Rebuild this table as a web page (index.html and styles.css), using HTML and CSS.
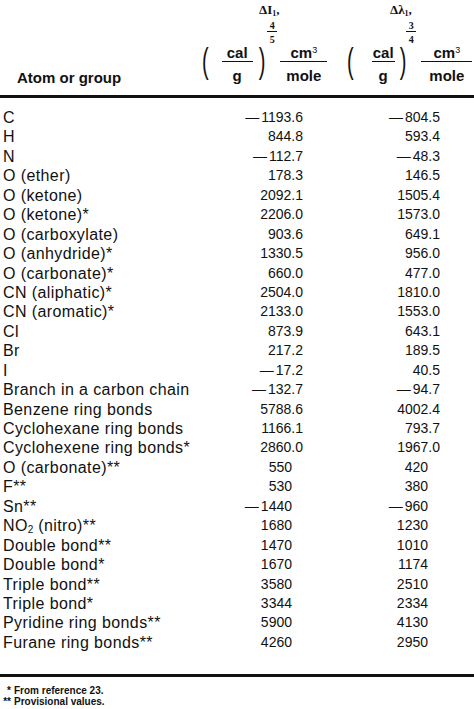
FILE: index.html
```html
<!DOCTYPE html>
<html lang="en">
<head>
<meta charset="utf-8">
<title>Group contributions</title>
<link rel="stylesheet" href="styles.css">
</head>
<body>
<table class="data">
  <colgroup>
    <col class="c-label">
    <col class="c-one">
    <col class="c-two">
  </colgroup>
  <thead>
    <tr>
      <th class="h-label">Atom or group</th>
      <th class="h-col h-one">
        <div class="h-sym">Δ<span class="sym-i">I</span><sub>1</sub>,</div>
        <div class="h-row">
          <span class="paren">(</span>
          <span class="frac f-cal"><span class="fn">cal</span><span class="fd">g</span></span>
          <span class="paren close">)</span>
          <span class="expo"><span class="en">4</span><span class="ed">5</span></span>
          <span class="frac f-cm"><span class="fn">cm<sup>3</sup></span><span class="fd">mole</span></span>
        </div>
      </th>
      <th class="h-col h-two">
        <div class="h-sym">Δλ<sub>1</sub>,</div>
        <div class="h-row">
          <span class="paren">(</span>
          <span class="frac f-cal"><span class="fn">cal</span><span class="fd">g</span></span>
          <span class="paren close">)</span>
          <span class="expo"><span class="en">3</span><span class="ed">4</span></span>
          <span class="frac f-cm"><span class="fn">cm<sup>3</sup></span><span class="fd">mole</span></span>
        </div>
      </th>
    </tr>
  </thead>
  <tbody>
    <tr class="first"><td class="label">C</td><td class="num"><span class="neg">—</span>1193.6</td><td class="num"><span class="neg">—</span>804.5</td></tr>
    <tr><td class="label">H</td><td class="num">844.8</td><td class="num">593.4</td></tr>
    <tr><td class="label">N</td><td class="num"><span class="neg">—</span>112.7</td><td class="num"><span class="neg">—</span>48.3</td></tr>
    <tr><td class="label">O (ether)</td><td class="num">178.3</td><td class="num">146.5</td></tr>
    <tr><td class="label">O (ketone)</td><td class="num">2092.1</td><td class="num">1505.4</td></tr>
    <tr><td class="label">O (ketone)*</td><td class="num">2206.0</td><td class="num">1573.0</td></tr>
    <tr><td class="label">O (carboxylate)</td><td class="num">903.6</td><td class="num">649.1</td></tr>
    <tr><td class="label">O (anhydride)*</td><td class="num">1330.5</td><td class="num">956.0</td></tr>
    <tr><td class="label">O (carbonate)*</td><td class="num">660.0</td><td class="num">477.0</td></tr>
    <tr><td class="label">CN (aliphatic)*</td><td class="num">2504.0</td><td class="num">1810.0</td></tr>
    <tr><td class="label">CN (aromatic)*</td><td class="num">2133.0</td><td class="num">1553.0</td></tr>
    <tr><td class="label">Cl</td><td class="num">873.9</td><td class="num">643.1</td></tr>
    <tr><td class="label">Br</td><td class="num">217.2</td><td class="num">189.5</td></tr>
    <tr><td class="label">I</td><td class="num"><span class="neg">—</span>17.2</td><td class="num">40.5</td></tr>
    <tr><td class="label">Branch in a carbon chain</td><td class="num"><span class="neg">—</span>132.7</td><td class="num"><span class="neg">—</span>94.7</td></tr>
    <tr><td class="label">Benzene ring bonds</td><td class="num">5788.6</td><td class="num">4002.4</td></tr>
    <tr><td class="label">Cyclohexane ring bonds</td><td class="num">1166.1</td><td class="num">793.7</td></tr>
    <tr><td class="label">Cyclohexene ring bonds*</td><td class="num">2860.0</td><td class="num">1967.0</td></tr>
    <tr><td class="label">O (carbonate)**</td><td class="num int">550</td><td class="num int">420</td></tr>
    <tr><td class="label">F**</td><td class="num int">530</td><td class="num int">380</td></tr>
    <tr><td class="label">Sn**</td><td class="num int"><span class="neg">—</span>1440</td><td class="num int"><span class="neg">—</span>960</td></tr>
    <tr><td class="label">NO<sub>2</sub> (nitro)**</td><td class="num int">1680</td><td class="num int">1230</td></tr>
    <tr><td class="label">Double bond**</td><td class="num int">1470</td><td class="num int">1010</td></tr>
    <tr><td class="label">Double bond*</td><td class="num int">1670</td><td class="num int">1174</td></tr>
    <tr><td class="label">Triple bond**</td><td class="num int">3580</td><td class="num int">2510</td></tr>
    <tr><td class="label">Triple bond*</td><td class="num int">3344</td><td class="num int">2334</td></tr>
    <tr><td class="label">Pyridine ring bonds**</td><td class="num int">5900</td><td class="num int">4130</td></tr>
    <tr><td class="label">Furane ring bonds**</td><td class="num int">4260</td><td class="num int">2950</td></tr>
  </tbody>
</table>
<div class="notes">
  <p class="note"><span class="mark">*</span>From reference 23.</p>
  <p class="note"><span class="mark">**</span>Provisional values.</p>
</div>
</body>
</html>
```

FILE: styles.css
```css
html, body {
  margin: 0;
  padding: 0;
  background: #ffffff;
  color: #111111;
}

body {
  width: 474px;
  font-family: "Liberation Sans", Arial, sans-serif;
  overflow: hidden;
}

.data {
  width: 474px;
  border-collapse: separate;
  border-spacing: 0;
  table-layout: fixed;
}

.c-label { width: 200px; }
.c-one { width: 135px; }
.c-two { width: 139px; }

/* header */
.data th {
  padding: 0;
  height: 98px;
  box-sizing: border-box;
  border-bottom: 3px solid #111111;
  font-weight: bold;
  text-align: left;
  vertical-align: top;
}

.h-label {
  vertical-align: bottom !important;
  padding: 0 0 8px 17px !important;
  font: bold 15px/18px "Liberation Sans", Arial, sans-serif;
}

.h-sym {
  height: 20px;
  padding-top: 2px;
  box-sizing: border-box;
  font: bold 13px/16px "Liberation Serif", "Times New Roman", serif;
}

.h-sym sub {
  font-size: 8px;
  vertical-align: -2px;
  line-height: 0;
}

.h-one .h-sym { padding-left: 59px; }
.h-two .h-sym { padding-left: 55px; }

.h-row {
  display: flex;
  align-items: flex-start;
  height: 68px;
}

.h-one .h-row { padding-left: 2px; }
.h-two .h-row { padding-left: 12px; }

.paren {
  display: inline-block;
  margin-top: 30px;
  font: 400 20px/20px "Liberation Sans", Arial, sans-serif;
  transform: scaleY(1.8);
}

.frac {
  display: flex;
  flex-direction: column;
  margin-top: 25px;
  text-align: center;
  font: bold 15px "Liberation Sans", Arial, sans-serif;
}

.fn {
  line-height: 16px;
  border-bottom: 1.5px solid #111111;
}

.fd {
  line-height: 16px;
  padding-top: 6px;
}

.fn sup {
  font-size: 9px;
  font-weight: normal;
  line-height: 0;
  vertical-align: 5px;
}

.expo {
  display: flex;
  flex-direction: column;
  margin-top: 0;
  text-align: center;
  width: 10px;
  font: bold 10px/11px "Liberation Serif", "Times New Roman", serif;
}

.en { border-bottom: 1px solid #111111; }
.ed { padding-top: 2px; }

.h-one .f-cal { margin-left: 13px; width: 31px; }
.h-one .close { margin-left: 6px; }
.h-one .expo { margin-left: 2px; }
.h-one .f-cm { margin-left: 3px; width: 47px; }

.h-two .f-cal { margin-left: 18px; width: 23px; }
.h-two .close { margin-left: 5px; }
.h-two .expo { margin-left: 0; }
.h-two .f-cm { margin-left: 5px; width: 51px; }

/* body */
.data td {
  padding: 0;
  height: 19.44px;
  line-height: 19.44px;
  white-space: nowrap;
}

.data tr.first td {
  padding-top: 10px;
}

.label {
  padding-left: 3px !important;
  font-size: 16px;
  letter-spacing: 0.4px;
}

.label sub {
  font-size: 10px;
  line-height: 0;
  vertical-align: -2px;
  letter-spacing: 0;
}

.num {
  text-align: right;
  font-size: 14px;
}

.neg {
  margin-right: 2px;
}

.data td.num:nth-child(2) { padding-right: 32px; }
.data td.num:nth-child(3) { padding-right: 34px; }
.data td.int:nth-child(2) { padding-right: 43px; }
.data td.int:nth-child(3) { padding-right: 46px; }

/* footnotes */
.notes {
  margin-top: 22px;
  border-top: 3px solid #111111;
  padding-top: 8px;
}

.note {
  margin: 0;
  display: flex;
  font: bold 10px/11px "Liberation Sans", Arial, sans-serif;
}

.mark {
  width: 11px;
  margin-right: 3px;
  text-align: right;
}
```
